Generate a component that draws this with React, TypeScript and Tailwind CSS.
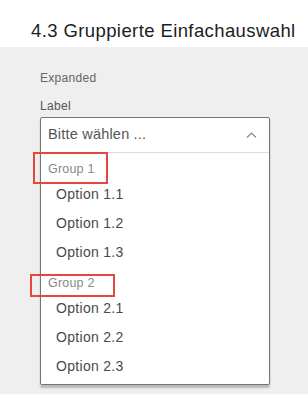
import React from 'react';

const groups = [
  { label: 'Group 1', options: ['Option 1.1', 'Option 1.2', 'Option 1.3'] },
  { label: 'Group 2', options: ['Option 2.1', 'Option 2.2', 'Option 2.3'] },
];

const ChevronUp = () => (
  <svg width="11" height="6" viewBox="0 0 11 6" fill="none" className="text-[#8a8a8a]">
    <path d="M1 5.5L5.5 1L10 5.5" stroke="currentColor" strokeWidth="1.2" />
  </svg>
);

export default function App() {
  return (
    <div className="min-h-[394px] w-[308px] bg-[#efefef] font-['Liberation_Sans',Arial,sans-serif]">
      <div className="flex h-[47px] items-center bg-white pl-[31px] pt-[15px]">
        <h1 className="text-[18.5px] leading-none tracking-[0.4px] text-[#1c1c22]">
          4.3 Gruppierte Einfachauswahl
        </h1>
      </div>

      <div className="pl-[40px] pt-[24px]">
        <p className="text-[12px] leading-[14px] tracking-[0.3px] text-[#666]">Expanded</p>
        <p className="mt-[14px] text-[12px] leading-[14px] tracking-[0.3px] text-[#555]">Label</p>

        <div className="relative mt-[4px] w-[230px] rounded-[2px] border border-[#747474] bg-white shadow-[0_3px_2px_rgba(0,0,0,0.22)]">
          <div className="flex h-[35px] items-center justify-between border-b border-[#dcdcdc] pl-[7px] pr-[12px]">
            <span className="text-[14.5px] tracking-[0.2px] text-[#555]">Bitte wählen ...</span>
            <ChevronUp />
          </div>

          {groups.map((group) => (
            <div key={group.label}>
              <div className="pl-[7px] pt-[8px] pb-[3px] text-[12.5px] leading-[16px] tracking-[0.2px] text-[#888]">
                {group.label}
              </div>
              {group.options.map((option) => (
                <div
                  key={option}
                  className="flex h-[29px] items-center pl-[15px] text-[14px] tracking-[0.3px] text-[#4a4a4a]"
                >
                  {option}
                </div>
              ))}
            </div>
          ))}
          <div className="h-[3px]" />

          <div className="absolute left-[-8px] top-[34px] h-[32px] w-[75px] border-2 border-[#e8453d]" />
          <div className="absolute left-[-11px] top-[156px] h-[23px] w-[85px] border-2 border-[#e8453d]" />
        </div>
      </div>
    </div>
  );
}
